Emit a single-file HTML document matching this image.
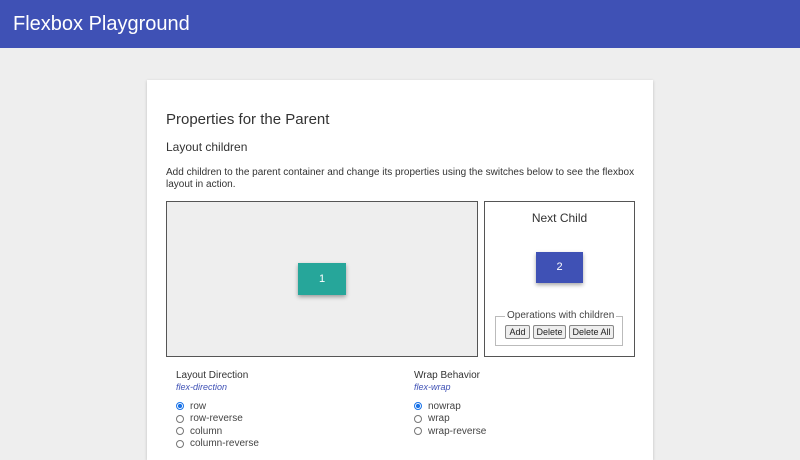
<!DOCTYPE html>
<html><head><style>
*{box-sizing:border-box;margin:0;padding:0}
body{width:800px;height:450px;overflow:hidden;background:#eeeeee;font-family:"Liberation Sans",sans-serif;color:#222;position:relative}
.bar{position:absolute;left:0;top:0;width:800px;height:48px;background:#3f51b5;color:#fff;font-size:20px;padding:13px 0 0 13px}
.card{position:absolute;left:147px;top:80px;width:506px;height:380px;background:#fff;box-shadow:0 1px 3px rgba(0,0,0,.2)}
.abs{position:absolute}
.box{border:1px solid #555}
.c1{background:#26a69a;color:#fff;font-size:11px;text-align:center;line-height:32px;box-shadow:0 2px 4px rgba(0,0,0,.35)}
.c2{background:#3f51b5;color:#fff;font-size:11px;text-align:center;line-height:31px;box-shadow:0 2px 4px rgba(0,0,0,.35)}
.btn{position:absolute;top:325px;height:14px;border:1px solid #888;background:#eee;font-size:9px;text-align:center;line-height:12px;border-radius:2px}
.r{font-size:10px;color:#444;height:12.5px;display:flex;align-items:center}
.r i{width:8px;height:8px;border:1px solid #777;border-radius:50%;margin-right:6px;display:inline-block}
.r i.on{border-color:#1a73e8;background:radial-gradient(circle,#1a73e8 45%,#fff 55%)}
.sub{font-style:italic;color:#3f51b5;font-size:9px;margin-top:1px}
</style></head><body>
<div class="bar">Flexbox Playground</div>
<div class="card"></div>
<div class="abs" style="left:166px;top:111px;font-size:15px;color:#333">Properties for the Parent</div>
<div class="abs" style="left:166px;top:140px;font-size:12px;color:#333">Layout children</div>
<div class="abs" style="left:166px;top:167px;font-size:10px;line-height:12px;width:470px;color:#333">Add children to the parent container and change its properties using the switches below to see the flexbox layout in action.</div>
<div class="abs box" style="left:166px;top:201px;width:312px;height:156px;background:#eeeeee"></div>
<div class="abs c1" style="left:298px;top:263px;width:48px;height:32px">1</div>
<div class="abs box" style="left:484px;top:201px;width:151px;height:156px"></div>
<div class="abs" style="left:484px;top:211px;width:151px;text-align:center;font-size:12px;color:#333">Next Child</div>
<div class="abs c2" style="left:536px;top:252px;width:47px;height:31px">2</div>
<div class="abs" style="left:495px;top:316px;width:128px;height:30px;border:1px solid #bbb"></div>
<div class="abs" style="left:505px;top:310px;background:#fff;padding:0 2px;font-size:10px;color:#444">Operations with children</div>
<div class="btn" style="left:505px;width:25px">Add</div>
<div class="btn" style="left:533px;width:33px">Delete</div>
<div class="btn" style="left:569px;width:45px">Delete All</div>
<div class="abs" style="left:176px;top:370px;font-size:10px;color:#333">Layout Direction<div class="sub">flex-direction</div>
<div style="margin-top:8px"><div class="r"><i class="on"></i>row</div><div class="r"><i></i>row-reverse</div><div class="r"><i></i>column</div><div class="r"><i></i>column-reverse</div></div></div>
<div class="abs" style="left:414px;top:370px;font-size:10px;color:#333">Wrap Behavior<div class="sub">flex-wrap</div>
<div style="margin-top:8px"><div class="r"><i class="on"></i>nowrap</div><div class="r"><i></i>wrap</div><div class="r"><i></i>wrap-reverse</div></div></div>
</body></html>
